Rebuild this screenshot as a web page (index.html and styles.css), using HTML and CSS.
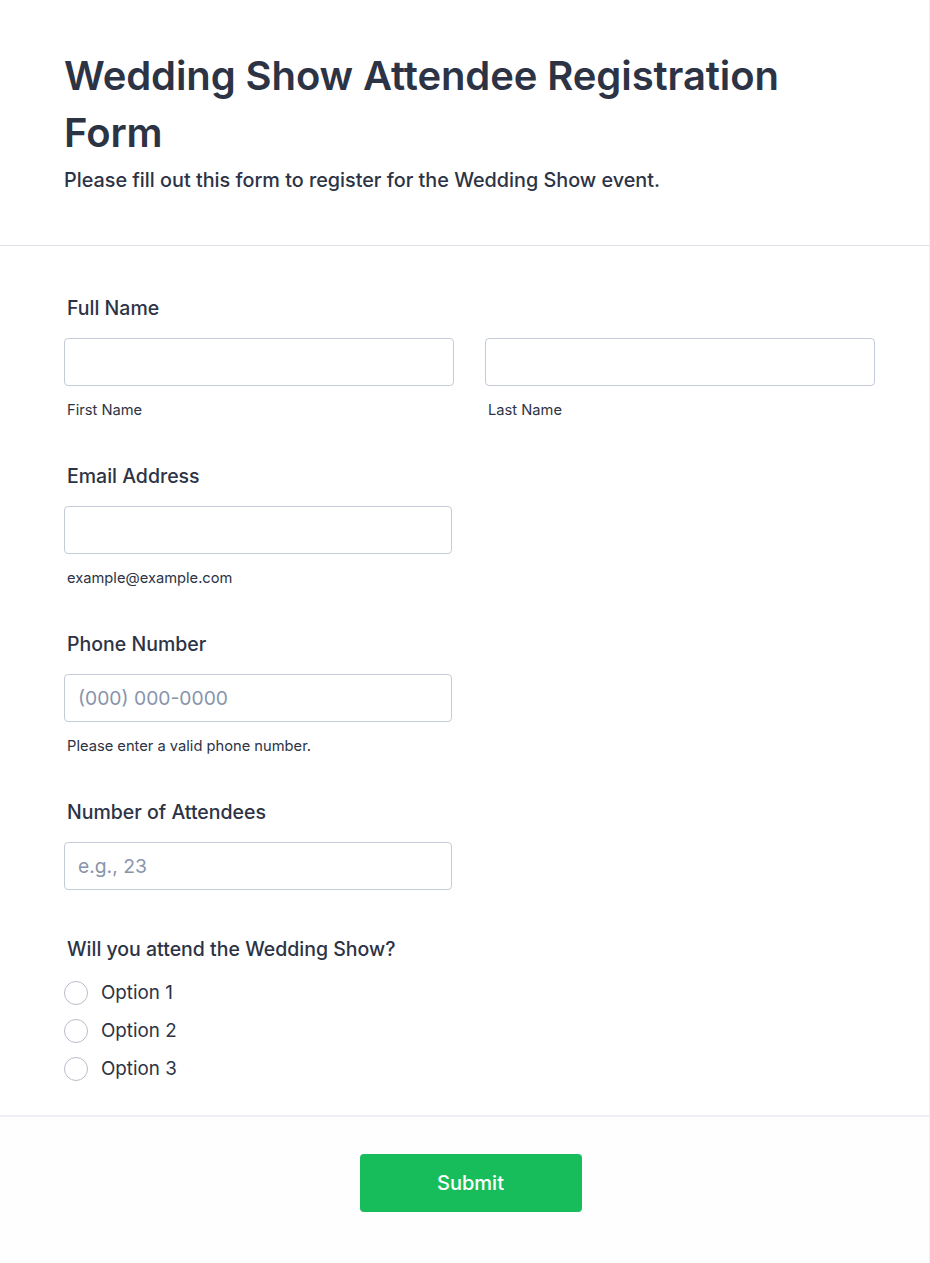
FILE: index.html
```html
<!DOCTYPE html>
<html>
  <head>
    <title>Wedding Show Attendee Registration Form</title>
    <link rel="stylesheet" href="styles.css">
  </head>
  <body>
    <form class="form">
      <div class="form-header">
        <h1>Wedding Show Attendee Registration Form</h1>
        <p>Please fill out this form to register for the Wedding Show event.</p>
      </div>

      <div class="form-body">
        <div class="field">
          <label class="field-label">Full Name</label>
          <div class="name-row">
            <div>
              <input type="text" class="input">
              <div class="sublabel">First Name</div>
            </div>
            <div>
              <input type="text" class="input">
              <div class="sublabel">Last Name</div>
            </div>
          </div>
        </div>

        <div class="field">
          <label class="field-label">Email Address</label>
          <input type="email" class="input input-single">
          <div class="sublabel">example@example.com</div>
        </div>

        <div class="field">
          <label class="field-label">Phone Number</label>
          <input type="tel" class="input input-single" placeholder="(000) 000-0000">
          <div class="sublabel">Please enter a valid phone number.</div>
        </div>

        <div class="field field-nosub">
          <label class="field-label">Number of Attendees</label>
          <input type="text" class="input input-single" placeholder="e.g., 23">
        </div>

        <div class="field field-last">
          <label class="field-label">Will you attend the Wedding Show?</label>
          <div class="options">
            <label class="option"><span class="radio"></span>Option 1</label>
            <label class="option"><span class="radio"></span>Option 2</label>
            <label class="option"><span class="radio"></span>Option 3</label>
          </div>
        </div>
      </div>

      <div class="form-footer">
        <button type="button" class="submit">Submit</button>
      </div>
    </form>
  </body>
</html>
```

FILE: styles.css
```css
body {
  margin: 0;
  font-family: Inter, "Noto Sans", sans-serif;
  color: #2c3345;
  background-color: #fff;
}

.form {
  border-right: 1px solid #eef0f3;
  min-height: 1263px;
  display: flex;
  flex-direction: column;
}

.form-header {
  padding: 47px 64px 51px;
  border-bottom: 1px solid #dcdfe6;
}

.form-header h1 {
  margin: 0;
  font-size: 40px;
  font-weight: 600;
  line-height: 57px;
  letter-spacing: -0.1px;
  max-width: 760px;
}

.form-header p {
  margin: 6px 0 0;
  font-size: 19.8px;
  font-weight: 500;
  line-height: 27px;
}

.form-body {
  padding: 50px 64px 34px;
}

.field {
  padding-bottom: 44px;
}

.field-nosub {
  padding-bottom: 47px;
}

.field-last {
  padding-bottom: 0;
}

.field-last .field-label {
  margin-bottom: 20px;
}

.field-label {
  display: block;
  margin: 0 0 18px 3px;
  font-size: 19.5px;
  font-weight: 500;
  line-height: 24px;
}

.name-row {
  display: grid;
  grid-template-columns: 390px 390px;
  column-gap: 31px;
}

.input {
  display: block;
  box-sizing: border-box;
  width: 100%;
  height: 48px;
  padding: 0 13px;
  border: 1px solid #c3cad8;
  border-radius: 4px;
  font-family: inherit;
  font-size: 19.3px;
  color: #2c3345;
  background-color: #fff;
}

.input::placeholder {
  color: #8894ab;
}

.input-single {
  width: 388px;
}

.sublabel {
  margin: 14px 0 0 3px;
  font-size: 14.7px;
  line-height: 20px;
}

.options {
  display: flex;
  flex-direction: column;
  gap: 14px;
}

.option {
  display: flex;
  align-items: center;
  gap: 13px;
  font-size: 18.8px;
  line-height: 24px;
}

.radio {
  box-sizing: border-box;
  width: 24px;
  height: 24px;
  border: 1px solid #b8bdc9;
  border-radius: 50%;
  background-color: #fff;
}

.form-footer {
  flex: 1;
  border-top: 2px solid #eef0f4;
  background-color: #fefefe;
  padding: 37px 0 50px 12px;
  text-align: center;
}

.submit {
  width: 222px;
  height: 58px;
  border: none;
  border-radius: 4px;
  background-color: #18bd5b;
  color: #fff;
  font-family: inherit;
  font-size: 20px;
  font-weight: 500;
  cursor: pointer;
}
```
